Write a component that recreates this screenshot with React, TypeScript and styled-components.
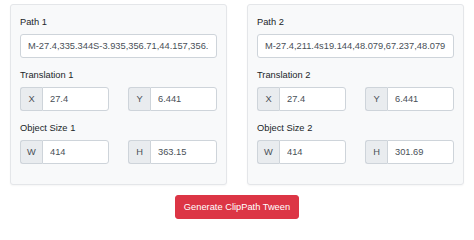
import React from "react";
import styled, { createGlobalStyle } from "styled-components";

const Global = createGlobalStyle`
  html, body { margin: 0; padding: 0; background: #ffffff; }
  body {
    font-family: "Liberation Sans", Arial, Helvetica, sans-serif;
    font-size: 9.3px;
    color: #212529;
  }
  * { box-sizing: border-box; }
`;

const Page = styled.div`
  padding: 4px 10px 0;
  display: flex;
  flex-direction: column;
  align-items: stretch;
`;

const Cards = styled.div`
  display: grid;
  grid-template-columns: minmax(0, 1fr) minmax(0, 1fr);
  gap: 20px;
`;

const Card = styled.div`
  min-width: 0;
  background: #f8f9fa;
  border: 1px solid #e4e6e9;
  border-radius: 3px;
  box-shadow: 0 1px 2px rgba(0, 0, 0, 0.04);
  padding: 10px 9px 10px;
`;

const Group = styled.div`
  margin-bottom: 10px;
`;

const Label = styled.div`
  font-size: 9.3px;
  line-height: 14px;
  height: 14px;
  margin-bottom: 5px;
  color: #212529;
`;

const TextInput = styled.input`
  display: block;
  width: 100%;
  min-width: 0;
  height: 24px;
  padding: 0 7px;
  font-family: "Liberation Sans", Arial, Helvetica, sans-serif;
  font-size: 9.3px;
  color: #495057;
  background: #ffffff;
  border: 1px solid #ced4da;
  border-radius: 3px;
  outline: none;
`;

const Pair = styled.div`
  display: grid;
  grid-template-columns: minmax(0, 1fr) minmax(0, 1fr);
  column-gap: 19px;
`;

const InputGroup = styled.div`
  display: flex;
  min-width: 0;
  height: 24px;
`;

const Addon = styled.span`
  flex: 0 0 22px;
  display: flex;
  align-items: center;
  justify-content: center;
  background: #e9ecef;
  border: 1px solid #ced4da;
  border-right: none;
  border-radius: 3px 0 0 3px;
  color: #495057;
  font-size: 9.3px;
`;

const GroupInput = styled(TextInput)`
  flex: 1 1 0;
  width: auto;
  border-radius: 0 3px 3px 0;
`;

const ButtonRow = styled.div`
  display: flex;
  justify-content: center;
  margin-top: 10px;
`;

const DangerButton = styled.button`
  height: 24px;
  width: 124px;
  padding: 0;
  background: #dc3545;
  border: 1px solid #dc3545;
  border-radius: 3px;
  color: #ffffff;
  font-family: "Liberation Sans", Arial, Helvetica, sans-serif;
  font-size: 9.3px;
  cursor: pointer;
`;

type Panel = {
  n: number;
  path: string;
  x: string;
  y: string;
  w: string;
  h: string;
};

const panels: Panel[] = [
  {
    n: 1,
    path: "M-27.4,335.344S-3.935,356.71,44.157,356.71",
    x: "27.4",
    y: "6.441",
    w: "414",
    h: "363.15",
  },
  {
    n: 2,
    path: "M-27.4,211.4s19.144,48.079,67.237,48.079",
    x: "27.4",
    y: "6.441",
    w: "414",
    h: "301.69",
  },
];

const Field: React.FC<{ tag: string; value: string }> = ({ tag, value }) => (
  <InputGroup>
    <Addon>{tag}</Addon>
    <GroupInput defaultValue={value} />
  </InputGroup>
);

export default function App() {
  return (
    <>
      <Global />
      <Page>
        <Cards>
          {panels.map((p) => (
            <Card key={p.n}>
              <Group>
                <Label>Path {p.n}</Label>
                <TextInput defaultValue={p.path} />
              </Group>
              <Group>
                <Label>Translation {p.n}</Label>
                <Pair>
                  <Field tag="X" value={p.x} />
                  <Field tag="Y" value={p.y} />
                </Pair>
              </Group>
              <Group>
                <Label>Object Size {p.n}</Label>
                <Pair>
                  <Field tag="W" value={p.w} />
                  <Field tag="H" value={p.h} />
                </Pair>
              </Group>
            </Card>
          ))}
        </Cards>
        <ButtonRow>
          <DangerButton>Generate ClipPath Tween</DangerButton>
        </ButtonRow>
      </Page>
    </>
  );
}
